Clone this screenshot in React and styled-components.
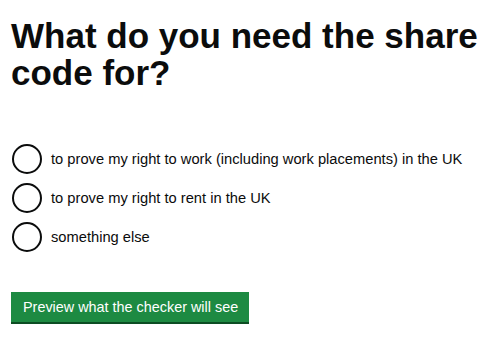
import React from "react";
import styled, { createGlobalStyle } from "styled-components";

const GlobalStyle = createGlobalStyle`
  html, body {
    margin: 0;
    padding: 0;
    background: #ffffff;
  }
  body {
    font-family: "Liberation Sans", Arial, sans-serif;
    color: #0b0c0c;
  }
`;

const Page = styled.main`
  padding: 17px 11px 12px;
`;

const Heading = styled.h1`
  margin: 0 0 53px;
  font-size: 35px;
  line-height: 37px;
  font-weight: 700;
`;

const RadioGroup = styled.fieldset`
  margin: 0 0 40px;
  padding: 0;
  border: 0;
  display: flex;
  flex-direction: column;
  gap: 9px;
`;

const RadioItem = styled.label`
  display: flex;
  align-items: center;
  gap: 9px;
  cursor: pointer;
`;

const Circle = styled.input.attrs({ type: "radio" })`
  appearance: none;
  margin: 0 0 0 1px;
  width: 30px;
  height: 30px;
  border: 2px solid #0b0c0c;
  border-radius: 50%;
  background: #fff;
  box-sizing: border-box;
  flex-shrink: 0;
`;

const LabelText = styled.span`
  font-size: 14.7px;
  line-height: 20px;
`;

const Button = styled.button`
  font-family: inherit;
  font-size: 14.4px;
  line-height: 19px;
  color: #ffffff;
  background: #1d8a42;
  border: 0;
  border-radius: 0;
  padding: 6px 11px 5px 12px;
  box-shadow: 0 2px 0 #0d4d23;
  cursor: pointer;
`;

const options = [
  "to prove my right to work (including work placements) in the UK",
  "to prove my right to rent in the UK",
  "something else",
];

export default function App() {
  return (
    <Page>
      <GlobalStyle />
      <Heading>What do you need the share code for?</Heading>
      <RadioGroup>
        {options.map((o) => (
          <RadioItem key={o}>
            <Circle name="purpose" />
            <LabelText>{o}</LabelText>
          </RadioItem>
        ))}
      </RadioGroup>
      <Button>Preview what the checker will see</Button>
    </Page>
  );
}
